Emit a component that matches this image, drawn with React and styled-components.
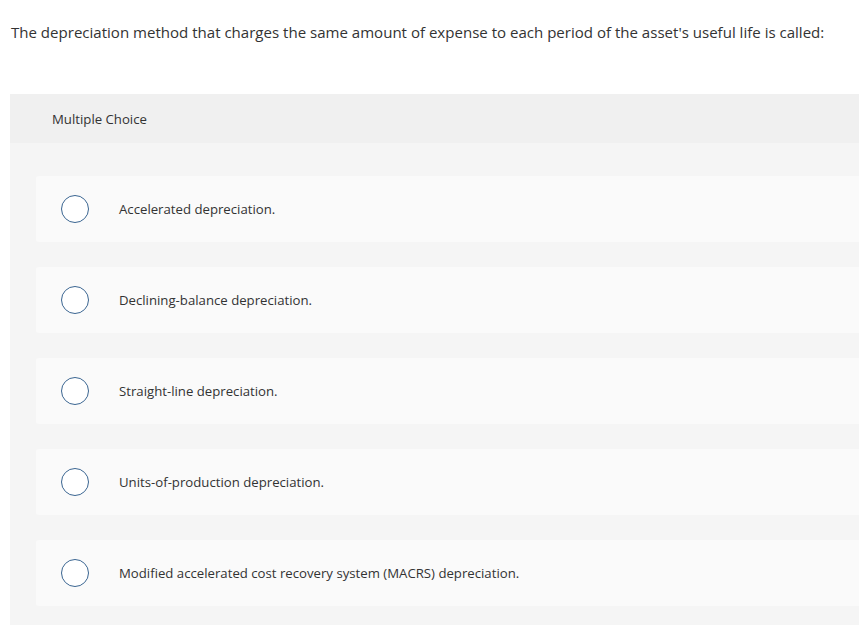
import styled, { createGlobalStyle } from 'styled-components';

const GlobalStyle = createGlobalStyle`
  html, body {
    margin: 0;
    padding: 0;
    background: #fff;
  }
  body {
    font-family: "Open Sans", "Lato", sans-serif;
    color: #333;
  }
`;

const Page = styled('div')`
  padding: 21px 0 0 10px;
  width: 849px;
  height: 604px;
  overflow: hidden;
`;

const Question = styled('p')`
  margin: 0 0 0 1px;
  font-size: 15.05px;
  line-height: 22px;
  color: #333;
`;

const Panel = styled('section')`
  margin-top: 51px;
  background-color: #f5f5f5;
`;

const PanelHeader = styled('div')`
  background-color: #f0f0f0;
  height: 49px;
  display: flex;
  align-items: center;
  padding-left: 42px;
  font-size: 13.2px;
  color: #333;
`;

const Choices = styled('ul')`
  list-style: none;
  margin: 0;
  padding: 33px 0 40px 26px;
  display: flex;
  flex-direction: column;
  gap: 25px;
`;

const Choice = styled('li')`
  background-color: #fafafa;
  border-radius: 3px 0 0 3px;
  height: 66px;
  display: flex;
  align-items: center;
  padding-left: 25px;
`;

const Radio = styled('span')`
  box-sizing: border-box;
  width: 28px;
  height: 28px;
  border-radius: 50%;
  border: 1.5px solid #3a6591;
  background: #fff;
  flex-shrink: 0;
`;

const Label = styled('span')`
  margin-left: 30px;
  font-size: 13.2px;
  color: #333;
`;

const options = [
  'Accelerated depreciation.',
  'Declining-balance depreciation.',
  'Straight-line depreciation.',
  'Units-of-production depreciation.',
  'Modified accelerated cost recovery system (MACRS) depreciation.',
];

export default function App() {
  return (
    <Page>
      <GlobalStyle />
      <Question>
        The depreciation method that charges the same amount of expense to each period of the asset's useful life is called:
      </Question>
      <Panel>
        <PanelHeader>Multiple Choice</PanelHeader>
        <Choices>
          {options.map((text) => (
            <Choice key={text}>
              <Radio />
              <Label>{text}</Label>
            </Choice>
          ))}
        </Choices>
      </Panel>
    </Page>
  );
}
